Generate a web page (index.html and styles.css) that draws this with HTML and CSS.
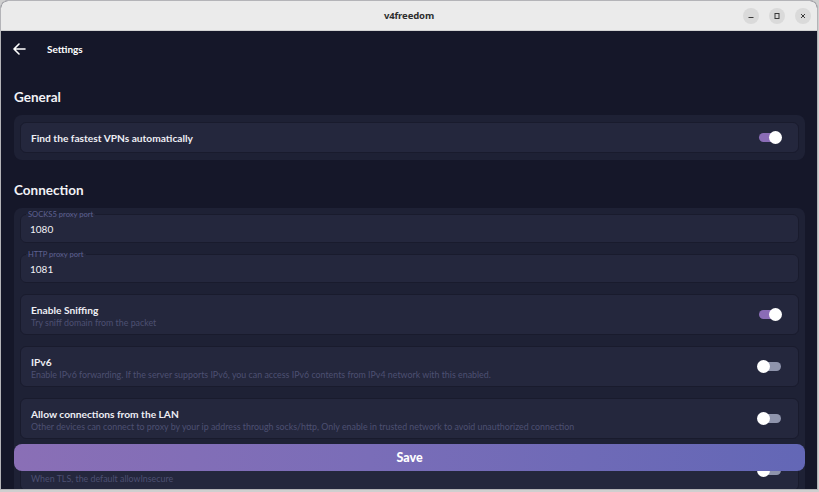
FILE: index.html
```html
<!DOCTYPE html>
<html lang="en">
<head>
<meta charset="utf-8">
<title>v4freedom</title>
<link rel="stylesheet" href="styles.css">
</head>
<body>
<div class="window">
  <header class="titlebar">
    <span class="title">v4freedom</span>
    <div class="wm-buttons">
      <span class="wm-btn"><svg width="8" height="8" viewBox="0 0 8 8"><path d="M1.5 5.5h5" stroke="#3a3a3a" stroke-width="1"/></svg></span>
      <span class="wm-btn"><svg width="8" height="8" viewBox="0 0 8 8"><rect x="2" y="1.5" width="4" height="5" fill="none" stroke="#3a3a3a" stroke-width="1"/></svg></span>
      <span class="wm-btn"><svg width="8" height="8" viewBox="0 0 8 8"><path d="M2 2l4 4M6 2l-4 4" stroke="#3a3a3a" stroke-width="1"/></svg></span>
    </div>
  </header>
  <div class="app">
    <nav class="appbar">
      <svg class="back" width="13" height="12" viewBox="0 0 13 12"><path d="M12 6H1.5M6 1L1 6l5 5" fill="none" stroke="#fff" stroke-width="1.6" stroke-linecap="round" stroke-linejoin="round"/></svg>
      <span class="appbar-title">Settings</span>
    </nav>
    <main class="content">
      <h2 class="section-title">General</h2>
      <section class="section">
        <div class="item item-single">
          <div class="item-text"><div class="item-title">Find the fastest VPNs automatically</div></div>
          <span class="toggle on"><span class="knob"></span></span>
        </div>
      </section>

      <h2 class="section-title">Connection</h2>
      <section class="section">
        <fieldset class="field">
          <legend>SOCKS5 proxy port</legend>
          <div class="field-value">1080</div>
        </fieldset>
        <fieldset class="field">
          <legend>HTTP proxy port</legend>
          <div class="field-value">1081</div>
        </fieldset>
        <div class="item">
          <div class="item-text">
            <div class="item-title">Enable Sniffing</div>
            <div class="item-sub">Try sniff domain from the packet</div>
          </div>
          <span class="toggle on"><span class="knob"></span></span>
        </div>
        <div class="item">
          <div class="item-text">
            <div class="item-title">IPv6</div>
            <div class="item-sub">Enable IPv6 forwarding. If the server supports IPv6, you can access IPv6 contents from IPv4 network with this enabled.</div>
          </div>
          <span class="toggle"><span class="knob"></span></span>
        </div>
        <div class="item">
          <div class="item-text">
            <div class="item-title">Allow connections from the LAN</div>
            <div class="item-sub">Other devices can connect to proxy by your ip address through socks/http, Only enable in trusted network to avoid unauthorized connection</div>
          </div>
          <span class="toggle"><span class="knob"></span></span>
        </div>
        <div class="item">
          <div class="item-text">
            <div class="item-title">Allow insecure</div>
            <div class="item-sub">When TLS, the default allowInsecure</div>
          </div>
          <span class="toggle"><span class="knob"></span></span>
        </div>
      </section>
    </main>
    <button class="save">Save</button>
  </div>
</div>
</body>
</html>
```

FILE: styles.css
```css
* { box-sizing: border-box; }
html, body { margin: 0; padding: 0; }
body {
  width: 819px;
  height: 492px;
  overflow: hidden;
  background: #cfcfcf;
  font-family: "Lato", "Noto Sans", sans-serif;
}
.window {
  width: 818px;
  height: 490px;
  border: 1px solid #b4b4b8;
  border-radius: 8px 8px 0 0;
  display: flex;
  flex-direction: column;
  overflow: hidden;
  background: #151729;
}
.titlebar {
  height: 30px;
  flex: none;
  background: #ebebeb;
  border-bottom: 1px solid #d2d2d2;
  display: flex;
  align-items: center;
  justify-content: center;
  position: relative;
}
.title {
  font-family: "Noto Sans", "DejaVu Sans", sans-serif;
  font-weight: 700;
  font-size: 9.5px;
  color: #2e2e2e;
  letter-spacing: -0.1px;
}
.wm-buttons {
  position: absolute;
  right: 6px;
  top: 7px;
  display: flex;
  gap: 10px;
}
.wm-btn {
  width: 16px;
  height: 16px;
  border-radius: 50%;
  background: #dadada;
  display: flex;
  align-items: center;
  justify-content: center;
}
.app {
  flex: 1;
  position: relative;
  display: flex;
  flex-direction: column;
  overflow: hidden;
}
.appbar {
  height: 36px;
  flex: none;
  display: flex;
  align-items: center;
  padding-left: 12px;
}
.back { display: block; }
.appbar-title {
  margin-left: 21px;
  color: #fff;
  font-weight: 700;
  font-size: 10px;
}
.content {
  padding: 0 12px 0 13px;
  display: flex;
  flex-direction: column;
}
.section-title {
  margin: 20px 0 8px;
  height: 20px;
  line-height: 20px;
  font-size: 13.5px;
  font-weight: 700;
  color: #f2f2f6;
}
.section {
  background: #1e2135;
  border-radius: 8px;
  padding: 6px 6px 7px;
  display: flex;
  flex-direction: column;
  gap: 11px;
}
.item {
  height: 41px;
  flex: none;
  background: #24273d;
  border: 1px solid #191b2d;
  border-radius: 6px;
  display: flex;
  align-items: center;
  padding: 0 17px 0 10px;
}
.item .item-text { margin-top: 3px; }
.item-single {
  height: 31px;
  margin-top: 1px;
}
.item.item-single .item-text { margin-top: 0; }
.item-text { flex: 1; min-width: 0; }
.item-title {
  font-size: 10.2px;
  line-height: 12px;
  font-weight: 700;
  color: #eeeef4;
}
.item-sub {
  font-size: 8.85px;
  line-height: 11px;
  margin-top: 1px;
  color: #4d5072;
  white-space: nowrap;
}
.toggle {
  position: relative;
  width: 22px;
  height: 9px;
  border-radius: 5px;
  background: #8f94ac;
  flex: none;
}
.toggle.on { background: #8a6cb6; }
.knob {
  position: absolute;
  top: -2px;
  left: -2px;
  width: 13px;
  height: 13px;
  border-radius: 50%;
  background: #fff;
}
.toggle.on .knob { left: auto; right: -1px; }
.field {
  margin: -4px 0 0;
  padding: 4px 9px 6px;
  border: 1px solid #191b2d;
  border-radius: 6px;
  background: #24273d;
  min-width: 0;
}
.field legend {
  font-size: 7.6px;
  line-height: 8px;
  color: #5f6192;
  padding: 0 2px;
  margin-left: -4px;
}
.field-value {
  font-size: 10px;
  line-height: 14px;
  color: #f2f2f6;
}
.save {
  position: absolute;
  left: 13px;
  right: 12px;
  bottom: 18px;
  height: 27px;
  border: 0;
  border-radius: 8px;
  background: linear-gradient(90deg, #8a6fb6 0%, #7a6db8 45%, #6367b6 100%);
  color: #fff;
  font-family: "Lato", sans-serif;
  font-weight: 900;
  font-size: 12.5px;
}
```
